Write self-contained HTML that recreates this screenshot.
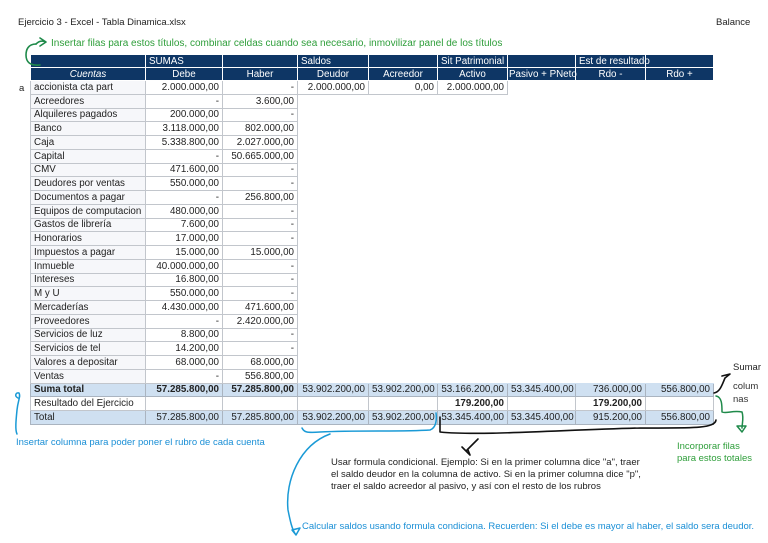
<!DOCTYPE html>
<html><head><meta charset="utf-8"><style>
*{margin:0;padding:0;box-sizing:border-box}
body{width:768px;height:543px;background:#fff;position:relative;overflow:hidden;font-family:"Liberation Sans",Arial,sans-serif;color:#222}
.t{position:absolute;white-space:nowrap}
table{position:absolute;left:30px;top:54px;width:683px;border-collapse:collapse;font-size:9.8px;table-layout:fixed}
td{height:13.75px;padding:0 3px;border:1px solid transparent;white-space:nowrap;overflow:visible;line-height:11px;vertical-align:middle}
.h td{background:#0e3665;color:#fff;border:1px solid #fff;height:13px}
.h2 td{text-align:center;padding:0 1px}
.h2 td:first-child{font-style:italic}
.b{border:1px solid #c2c6cc}
.l{background:#f6f7fa}
.r{text-align:right}
.s td{background:#cfe0f1;border:1px solid #aab4c0;text-align:right}
.s td:first-child{text-align:left}
.w td{background:#fff;border:1px solid #c2c6cc;text-align:right}
.w td:first-child{text-align:left}
</style></head><body>
<div class="t" style="left:18px;top:17px;font-size:9.5px">Ejercicio 3 - Excel - Tabla Dinamica.xlsx</div>
<div class="t" style="left:716px;top:17px;font-size:9.5px">Balance</div>
<div class="t" style="left:51px;top:38px;font-size:10px;color:#2e9e3a">Insertar filas para estos títulos, combinar celdas cuando sea necesario, inmovilizar panel de los títulos</div>
<div class="t" style="left:19px;top:83px;font-size:9.5px">a</div>
<table>
<colgroup><col style="width:115px"><col style="width:77px"><col style="width:75px"><col style="width:71px"><col style="width:69px"><col style="width:70px"><col style="width:68px"><col style="width:70px"><col style="width:68px"></colgroup>
<tr class="h"><td></td><td>SUMAS</td><td></td><td>Saldos</td><td></td><td>Sit Patrimonial</td><td></td><td>Est de resultado</td><td></td></tr>
<tr class="h h2"><td>Cuentas</td><td>Debe</td><td>Haber</td><td>Deudor</td><td>Acreedor</td><td>Activo</td><td>Pasivo + PNeto</td><td>Rdo -</td><td>Rdo +</td></tr>
<tr><td class="b l">accionista cta part</td><td class="b r">2.000.000,00</td><td class="b r">-</td><td class="b r">2.000.000,00</td><td class="b r">0,00</td><td class="b r">2.000.000,00</td><td></td><td></td><td></td></tr>
<tr><td class="b l">Acreedores</td><td class="b r">-</td><td class="b r">3.600,00</td><td></td><td></td><td></td><td></td><td></td><td></td></tr>
<tr><td class="b l">Alquileres pagados</td><td class="b r">200.000,00</td><td class="b r">-</td><td></td><td></td><td></td><td></td><td></td><td></td></tr>
<tr><td class="b l">Banco</td><td class="b r">3.118.000,00</td><td class="b r">802.000,00</td><td></td><td></td><td></td><td></td><td></td><td></td></tr>
<tr><td class="b l">Caja</td><td class="b r">5.338.800,00</td><td class="b r">2.027.000,00</td><td></td><td></td><td></td><td></td><td></td><td></td></tr>
<tr><td class="b l">Capital</td><td class="b r">-</td><td class="b r">50.665.000,00</td><td></td><td></td><td></td><td></td><td></td><td></td></tr>
<tr><td class="b l">CMV</td><td class="b r">471.600,00</td><td class="b r">-</td><td></td><td></td><td></td><td></td><td></td><td></td></tr>
<tr><td class="b l">Deudores por ventas</td><td class="b r">550.000,00</td><td class="b r">-</td><td></td><td></td><td></td><td></td><td></td><td></td></tr>
<tr><td class="b l">Documentos a pagar</td><td class="b r">-</td><td class="b r">256.800,00</td><td></td><td></td><td></td><td></td><td></td><td></td></tr>
<tr><td class="b l">Equipos de computacion</td><td class="b r">480.000,00</td><td class="b r">-</td><td></td><td></td><td></td><td></td><td></td><td></td></tr>
<tr><td class="b l">Gastos de librería</td><td class="b r">7.600,00</td><td class="b r">-</td><td></td><td></td><td></td><td></td><td></td><td></td></tr>
<tr><td class="b l">Honorarios</td><td class="b r">17.000,00</td><td class="b r">-</td><td></td><td></td><td></td><td></td><td></td><td></td></tr>
<tr><td class="b l">Impuestos a pagar</td><td class="b r">15.000,00</td><td class="b r">15.000,00</td><td></td><td></td><td></td><td></td><td></td><td></td></tr>
<tr><td class="b l">Inmueble</td><td class="b r">40.000.000,00</td><td class="b r">-</td><td></td><td></td><td></td><td></td><td></td><td></td></tr>
<tr><td class="b l">Intereses</td><td class="b r">16.800,00</td><td class="b r">-</td><td></td><td></td><td></td><td></td><td></td><td></td></tr>
<tr><td class="b l">M y U</td><td class="b r">550.000,00</td><td class="b r">-</td><td></td><td></td><td></td><td></td><td></td><td></td></tr>
<tr><td class="b l">Mercaderías</td><td class="b r">4.430.000,00</td><td class="b r">471.600,00</td><td></td><td></td><td></td><td></td><td></td><td></td></tr>
<tr><td class="b l">Proveedores</td><td class="b r">-</td><td class="b r">2.420.000,00</td><td></td><td></td><td></td><td></td><td></td><td></td></tr>
<tr><td class="b l">Servicios de luz</td><td class="b r">8.800,00</td><td class="b r">-</td><td></td><td></td><td></td><td></td><td></td><td></td></tr>
<tr><td class="b l">Servicios de tel</td><td class="b r">14.200,00</td><td class="b r">-</td><td></td><td></td><td></td><td></td><td></td><td></td></tr>
<tr><td class="b l">Valores a depositar</td><td class="b r">68.000,00</td><td class="b r">68.000,00</td><td></td><td></td><td></td><td></td><td></td><td></td></tr>
<tr><td class="b l">Ventas</td><td class="b r">-</td><td class="b r">556.800,00</td><td></td><td></td><td></td><td></td><td></td><td></td></tr>
<tr class="s"><td style="font-weight:bold">Suma total</td><td style="font-weight:bold">57.285.800,00</td><td style="font-weight:bold">57.285.800,00</td><td>53.902.200,00</td><td>53.902.200,00</td><td>53.166.200,00</td><td>53.345.400,00</td><td>736.000,00</td><td>556.800,00</td></tr>
<tr class="w"><td>Resultado del Ejercicio</td><td></td><td></td><td></td><td></td><td style="font-weight:bold">179.200,00</td><td></td><td style="font-weight:bold">179.200,00</td><td></td></tr>
<tr class="s"><td>Total</td><td>57.285.800,00</td><td>57.285.800,00</td><td>53.902.200,00</td><td>53.902.200,00</td><td>53.345.400,00</td><td>53.345.400,00</td><td>915.200,00</td><td>556.800,00</td></tr>
</table>
<div class="t" style="left:733px;top:362px;font-size:9.5px">Sumar</div>
<div class="t" style="left:733px;top:380px;font-size:9.5px;line-height:13px;color:#333">colum<br>nas</div>
<div class="t" style="left:16px;top:437px;font-size:9.5px;color:#1a8fd6">Insertar columna para poder poner el rubro de cada cuenta</div>
<div class="t" style="left:677px;top:441px;font-size:9.5px;line-height:12px;color:#2e9e3a">Incorporar filas<br>para estos totales</div>
<div class="t" style="left:331px;top:457px;font-size:9.5px;line-height:12px;color:#222">Usar formula condicional. Ejemplo: Si en la primer columna dice "a", traer<br>el saldo deudor en la columna de activo. Si en la primer columna dice "p",<br>traer el saldo acreedor al pasivo, y así con el resto de los rubros</div>
<div class="t" style="left:302px;top:521px;font-size:9.5px;color:#1a8fd6">Calcular saldos usando formula condiciona. Recuerden: Si el debe es mayor al haber, el saldo sera deudor.</div>
<svg width="768" height="543" style="position:absolute;left:0;top:0" fill="none" stroke-linecap="round" stroke-linejoin="round">
<path d="M36 44 C28 44 26 50 26 55 C26 62 30 66 40 65" stroke="#1f8a4a" stroke-width="1.6"/>
<path d="M36 44 C40 40 44 41 46 42 L40 38 L46 42 L40 46" stroke="#1f8a4a" stroke-width="1.6"/>
<path d="M18 398 C14 396 16 392 19 393 C21 396 18 400 17 410 C16 420 15 430 17 434" stroke="#1a9ad6" stroke-width="1.5"/>
<path d="M302 428 C304 432 306 433 320 432 C360 430 400 432 430 430 C436 428 437 420 436 413" stroke="#1a9ad6" stroke-width="1.5"/>
<path d="M330 434 C300 445 285 480 288 510 C290 520 292 530 296 535 L300 528 L292 530 L296 535" stroke="#1a9ad6" stroke-width="1.5"/>
<path d="M440 417 L440 432 C480 436 560 430 640 428 C690 428 715 429 716 420" stroke="#111" stroke-width="1.6"/>
<path d="M478 439 L467 450 M462 447 L470 455 L468 450" stroke="#111" stroke-width="1.6"/>
<path d="M714 393 C720 392 722 385 725 378 L730 374 L722 376" stroke="#111" stroke-width="1.6"/>
<path d="M716 396 C722 397 722 405 722 412 C726 414 733 410 742 412 C744 418 742 424 742 428 M737 426 L742 432 L746 426 Z" stroke="#1f8a4a" stroke-width="1.5"/>
</svg>
</body></html>
